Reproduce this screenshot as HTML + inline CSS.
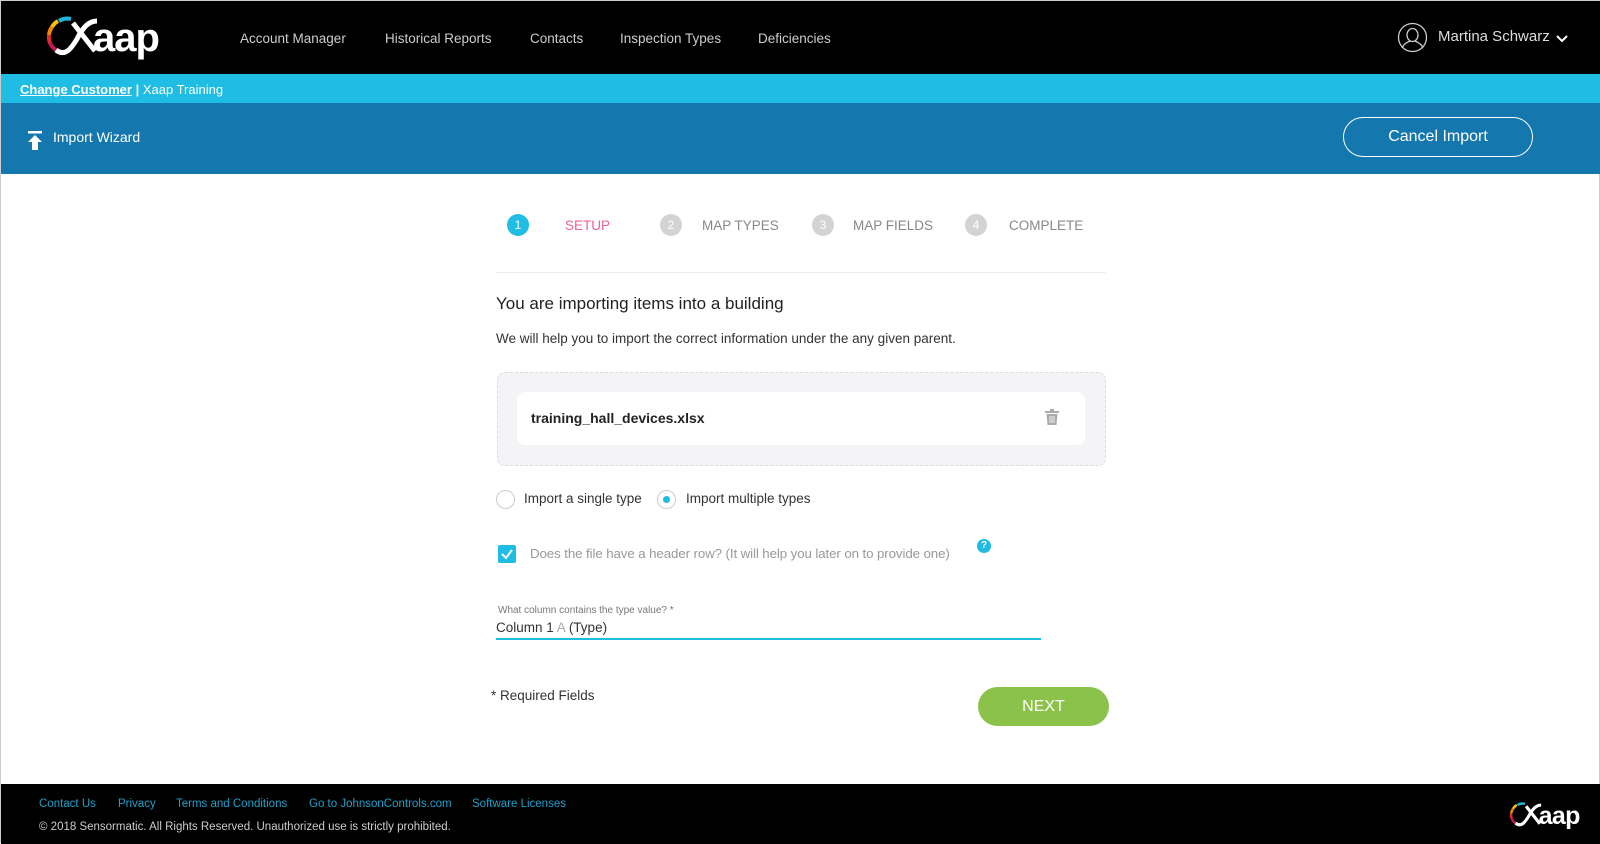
<!DOCTYPE html>
<html><head><meta charset="utf-8"><style>
*{margin:0;padding:0;box-sizing:border-box}
body{width:1600px;height:843px;position:relative;background:#fff;font-family:"Liberation Sans",sans-serif;overflow:hidden;border:1px solid #ccc}
.a{position:absolute;white-space:nowrap}
.nav{color:#ccc;font-size:13.5px;top:30px}
.step{font-size:13.5px;color:#888;top:217px}
.circ{position:absolute;width:22px;height:22px;border-radius:50%;background:#d3d3d3;color:#fff;font-size:12px;text-align:center;line-height:22px;top:213px}
.fl{color:#1ea0cc;font-size:11.5px;top:797px}
</style></head><body>
<div class="a" style="left:0;top:0;width:1600px;height:73px;background:#000"></div>
<svg class="a" style="left:42px;top:12px" width="130" height="48" viewBox="0 0 130 48">
<path d="M16 8 A16 16 0 0 1 28 6" stroke="#1fb5d8" stroke-width="4" fill="none"/>
<path d="M9 14 A16 16 0 0 1 15 8" stroke="#f4c20d" stroke-width="4" fill="none"/>
<path d="M6 22 A16 16 0 0 1 9 14" stroke="#f18a00" stroke-width="4" fill="none"/>
<path d="M7 30 A16 16 0 0 1 6 22" stroke="#e52b2b" stroke-width="4" fill="none"/>
<path d="M13 37 A16 16 0 0 1 7 30" stroke="#c2185b" stroke-width="4" fill="none"/>
<path d="M13 37 C22 44 28 36 34 26 C40 14 46 8 54 8" stroke="#fff" stroke-width="5" fill="none"/>
<path d="M30 10 L52 38" stroke="#fff" stroke-width="5"/>
<text x="50" y="38" fill="#fff" font-family="Liberation Sans" font-size="40" font-weight="bold" letter-spacing="-1">aap</text>
</svg>
<div class="a nav" style="left:239px">Account Manager</div>
<div class="a nav" style="left:384px">Historical Reports</div>
<div class="a nav" style="left:529px">Contacts</div>
<div class="a nav" style="left:619px">Inspection Types</div>
<div class="a nav" style="left:757px">Deficiencies</div>
<svg class="a" style="left:1396px;top:21px" width="31" height="31" viewBox="0 0 31 31"><circle cx="15.5" cy="15.5" r="14" fill="none" stroke="#ccc" stroke-width="1.3"/><path d="M10 13 a5.5 6.5 0 1 1 11 0 a5.5 6.5 0 1 1 -11 0 M5 26 C7 21 11 20 13 19 M26 26 C24 21 20 20 18 19" fill="none" stroke="#ccc" stroke-width="1.3"/></svg>
<div class="a" style="left:1437px;top:27px;color:#ddd;font-size:15px">Martina Schwarz</div>
<svg class="a" style="left:1555px;top:33px" width="12" height="9"><path d="M1 2 L6 7 L11 2" stroke="#fff" stroke-width="2" fill="none"/></svg>
<div class="a" style="left:0;top:73px;width:1600px;height:29px;background:#1fbce3"></div>
<div class="a" style="left:19px;top:81px;color:#fff;font-size:13px"><b style="text-decoration:underline">Change Customer</b> <b>|</b> Xaap Training</div>
<div class="a" style="left:0;top:102px;width:1600px;height:71px;background:#1477ae"></div>
<svg class="a" style="left:26px;top:130px" width="16" height="20"><rect x="1" y="0" width="14" height="2.5" fill="#fff"/><path d="M8 4 L15 11 L11 11 L11 19 L5 19 L5 11 L1 11Z" fill="#fff"/></svg>
<div class="a" style="left:52px;top:128px;color:#fff;font-size:14px">Import Wizard</div>
<div class="a" style="left:1342px;top:116px;width:190px;height:40px;border:1.5px solid #fff;border-radius:20px;color:#fff;font-size:16px;text-align:center;line-height:37px">Cancel Import</div>
<div class="circ" style="left:506px;background:#1fbce3">1</div>
<div class="a step" style="left:564px;color:#f0609a">SETUP</div>
<div class="circ" style="left:659px">2</div>
<div class="a step" style="left:701px">MAP TYPES</div>
<div class="circ" style="left:811px">3</div>
<div class="a step" style="left:852px">MAP FIELDS</div>
<div class="circ" style="left:964px">4</div>
<div class="a step" style="left:1008px">COMPLETE</div>
<div class="a" style="left:495px;top:271px;width:610px;height:1px;background:#eee"></div>
<div class="a" style="left:495px;top:293px;font-size:17px;color:#222">You are importing items into a building</div>
<div class="a" style="left:495px;top:330px;font-size:13.5px;color:#333">We will help you to import the correct information under the any given parent.</div>
<div class="a" style="left:496px;top:371px;width:609px;height:94px;background:#f4f4f6;border:1.5px dashed #ddd;border-radius:8px"></div>
<div class="a" style="left:516px;top:391px;width:568px;height:53px;background:#fff;border-radius:8px"></div>
<div class="a" style="left:530px;top:409px;font-size:14px;font-weight:bold;color:#222">training_hall_devices.xlsx</div>
<svg class="a" style="left:1044px;top:408px" width="14" height="16"><rect x="0" y="2" width="14" height="2" fill="#aaa"/><rect x="5" y="0" width="4" height="2" fill="#aaa"/><path d="M1.5 5 H12.5 L11.5 16 H2.5Z" fill="#aaa"/><path d="M5 7 V14 M7 7 V14 M9 7 V14" stroke="#fff" stroke-width=".8"/></svg>
<div class="a" style="left:495px;top:489px;width:19px;height:19px;border:1px solid #ccc;border-radius:50%"></div>
<div class="a" style="left:523px;top:490px;font-size:13.5px;color:#333">Import a single type</div>
<div class="a" style="left:656px;top:489px;width:19px;height:19px;border:1px solid #ccc;border-radius:50%"><div style="margin:5px;width:7px;height:7px;border-radius:50%;background:#1fbce3"></div></div>
<div class="a" style="left:685px;top:490px;font-size:13.5px;color:#333">Import multiple types</div>
<div class="a" style="left:497px;top:544px;width:18px;height:18px;background:#1fbce3;border-radius:2px"><svg width="18" height="18"><path d="M4 9 L8 13 L14 5" stroke="#fff" stroke-width="2" fill="none"/></svg></div>
<div class="a" style="left:529px;top:545px;font-size:13.3px;color:#999;letter-spacing:-0.1px">Does the file have a header row? (It will help you later on to provide one)</div>
<div class="a" style="left:976px;top:538px;width:14px;height:14px;border-radius:50%;background:#1fbce3;color:#fff;font-size:10px;font-weight:bold;text-align:center;line-height:14px">?</div>
<div class="a" style="left:497px;top:604px;font-size:10px;color:#777">What column contains the type value? *</div>
<div class="a" style="left:495px;top:619px;font-size:13.5px;color:#333">Column 1 <span style="color:#aaa">A</span> (Type)</div>
<div class="a" style="left:495px;top:637px;width:545px;height:2px;background:#1fbce3"></div>
<div class="a" style="left:490px;top:687px;font-size:13.5px;color:#333">* Required Fields</div>
<div class="a" style="left:977px;top:686px;width:131px;height:39px;background:#8bc34a;border-radius:20px;color:#fff;font-size:16px;text-align:center;line-height:39px">NEXT</div>
<div class="a" style="left:0;top:783px;width:1600px;height:60px;background:#000"></div>
<div class="a fl" style="left:38px">Contact Us</div>
<div class="a fl" style="left:117px">Privacy</div>
<div class="a fl" style="left:175px">Terms and Conditions</div>
<div class="a fl" style="left:308px">Go to JohnsonControls.com</div>
<div class="a fl" style="left:471px">Software Licenses</div>
<div class="a" style="left:38px;top:820px;font-size:11.5px;color:#ccc">© 2018 Sensormatic. All Rights Reserved. Unauthorized use is strictly prohibited.</div>
<svg class="a" style="left:1506px;top:799px" width="82" height="30" viewBox="0 0 130 48">
<path d="M16 8 A16 16 0 0 1 28 6" stroke="#1fb5d8" stroke-width="4" fill="none"/>
<path d="M9 14 A16 16 0 0 1 15 8" stroke="#f4c20d" stroke-width="4" fill="none"/>
<path d="M6 22 A16 16 0 0 1 9 14" stroke="#f18a00" stroke-width="4" fill="none"/>
<path d="M7 30 A16 16 0 0 1 6 22" stroke="#e52b2b" stroke-width="4" fill="none"/>
<path d="M13 37 A16 16 0 0 1 7 30" stroke="#c2185b" stroke-width="4" fill="none"/>
<path d="M13 37 C22 44 28 36 34 26 C40 14 46 8 54 8" stroke="#fff" stroke-width="5" fill="none"/>
<path d="M30 10 L52 38" stroke="#fff" stroke-width="5"/>
<text x="50" y="38" fill="#fff" font-family="Liberation Sans" font-size="40" font-weight="bold" letter-spacing="-1">aap</text>
</svg>
</body></html>
